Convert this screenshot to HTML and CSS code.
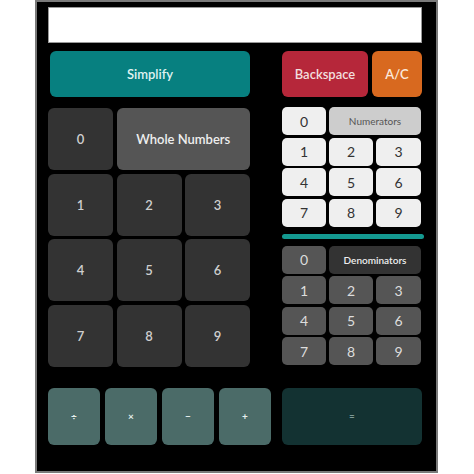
FILE: index.html
```html
<!DOCTYPE html>
<html lang="en">
<head>
  <meta charset="UTF-8">
  <title>Fraction Calculator</title>
  <link rel="stylesheet" href="styles.css">
</head>
<body>
  <div class="calc">
    <input class="display" type="text">

    <div class="main">
      <div class="left">
        <button class="btn simplify">Simplify</button>
        <div class="whole-pad">
          <button class="btn key">0</button>
          <button class="btn key label wide">Whole Numbers</button>
          <button class="btn key">1</button>
          <button class="btn key">2</button>
          <button class="btn key">3</button>
          <button class="btn key">4</button>
          <button class="btn key">5</button>
          <button class="btn key">6</button>
          <button class="btn key">7</button>
          <button class="btn key">8</button>
          <button class="btn key">9</button>
        </div>
      </div>

      <div class="right">
        <div class="controls">
          <button class="btn backspace">Backspace</button>
          <button class="btn clear">A/C</button>
        </div>
        <div class="frac-pad num">
          <button class="btn">0</button>
          <button class="btn label wide">Numerators</button>
          <button class="btn">1</button>
          <button class="btn">2</button>
          <button class="btn">3</button>
          <button class="btn">4</button>
          <button class="btn">5</button>
          <button class="btn">6</button>
          <button class="btn">7</button>
          <button class="btn">8</button>
          <button class="btn">9</button>
        </div>
        <div class="fraction-bar"></div>
        <div class="frac-pad den">
          <button class="btn">0</button>
          <button class="btn label wide">Denominators</button>
          <button class="btn">1</button>
          <button class="btn">2</button>
          <button class="btn">3</button>
          <button class="btn">4</button>
          <button class="btn">5</button>
          <button class="btn">6</button>
          <button class="btn">7</button>
          <button class="btn">8</button>
          <button class="btn">9</button>
        </div>
      </div>
    </div>

    <div class="bottom">
      <div class="ops">
        <button class="btn op">÷</button>
        <button class="btn op">×</button>
        <button class="btn op">−</button>
        <button class="btn op">+</button>
      </div>
      <button class="btn equals">=</button>
    </div>
  </div>
</body>
</html>
```

FILE: styles.css
```css
* {
  box-sizing: border-box;
}
body {
  margin: 0;
  background: #fff;
  font-family: "Lato", "Open Sans", sans-serif;
}
.calc {
  margin-left: 35px;
  width: 403px;
  height: 473px;
  background: #000;
  border: 2px solid #7a7a7a;
  padding: 5px 14px 0 11px;
}
.display {
  display: block;
  width: 374px;
  height: 36px;
  margin: 0;
  border: 1px solid #999;
  background: #fff;
}
.btn {
  border: none;
  border-radius: 6px;
  padding: 0;
  font-family: inherit;
  cursor: pointer;
}
.main {
  display: flex;
  gap: 32px;
  margin-top: 8px;
}
.left {
  width: 202px;
}
.simplify {
  display: block;
  width: 200px;
  height: 46px;
  margin-left: 2px;
  background: #078080;
  color: #dff2f0;
  font-size: 13px;
  font-weight: 600;
}
.whole-pad {
  display: grid;
  grid-template-columns: repeat(3, 65px);
  grid-auto-rows: 62px;
  gap: 3.5px;
  margin-top: 11px;
}
.whole-pad .key {
  background: #333;
  color: #cfcfcf;
  font-size: 13px;
  font-weight: 600;
}
.wide {
  grid-column: span 2;
}
.whole-pad .label {
  background: #555;
  color: #eee;
}
.right {
  width: 141px;
}
.controls {
  display: flex;
  gap: 4px;
  height: 46px;
}
.backspace {
  width: 86px;
  background: #b6273a;
  color: #f2dede;
  font-size: 13px;
  font-weight: 600;
}
.clear {
  width: 50px;
  background: #d8691f;
  color: #fbe9dc;
  font-size: 13px;
  font-weight: 600;
}
.frac-pad {
  display: grid;
  grid-template-columns: 44px 44px 45px;
  grid-auto-rows: 28px;
  gap: 2.5px 3px;
}
.frac-pad .btn {
  border-radius: 5px;
  font-size: 14px;
}
.frac-pad .label {
  font-size: 10px;
}
.num {
  margin-top: 10px;
}
.num .btn {
  background: #efefef;
  color: #333;
}
.num .label {
  background: #cdcdcd;
  color: #555;
}
.fraction-bar {
  width: 142px;
  height: 5px;
  margin-top: 7px;
  border-radius: 3px;
  background: #149990;
}
.den {
  margin-top: 7px;
}
.den .btn {
  background: #555;
  color: #ddd;
}
.den .label {
  background: #333;
  color: #eee;
  font-weight: 600;
}
.bottom {
  display: flex;
  gap: 11px;
  margin-top: 21px;
}
.ops {
  display: flex;
  gap: 5px;
}
.op {
  width: 52px;
  height: 57px;
  background: #4b6b68;
  color: #e6f0ee;
  font-size: 10px;
  font-weight: bold;
}
.equals {
  width: 142px;
  height: 57px;
  background: #133232;
  color: #cfe0de;
  font-size: 10px;
}
```
